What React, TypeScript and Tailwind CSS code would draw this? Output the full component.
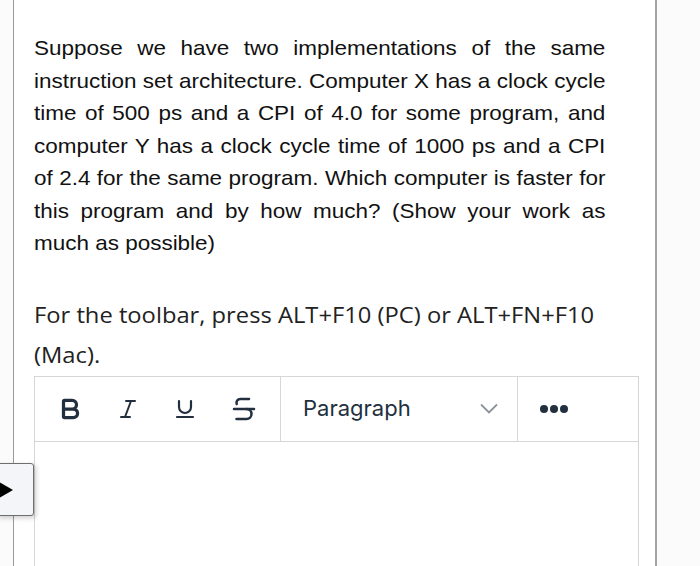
import React from 'react';
import { Bold, Italic, Underline, Strikethrough } from 'lucide-react';

export default function App() {
  return (
    <div className="relative h-[566px] w-[700px] overflow-hidden bg-[#fbfbfb]">
      {/* Question panel */}
      <div className="ml-[13px] h-full w-[644px] border-l border-r-2 border-l-[#9a9a9a] border-r-[#a3a3a3] bg-white pl-[20px] pr-[18px] pt-[32px]">
        {/* the source shot is stretched sideways, so the text is widened to match */}
        <p
          className="w-[534px] origin-left scale-x-[1.07] text-justify text-[21px] leading-[32.5px] text-[#111]"
          style={{ fontFamily: '"Liberation Sans", Arial, sans-serif' }}
        >
          Suppose we have two implementations of the same instruction set architecture. Computer X has a clock cycle
          time of 500 ps and a CPI of 4.0 for some program, and computer Y has a clock cycle time of 1000 ps and a CPI
          of 2.4 for the same program. Which computer is faster for this program and by how much? (Show your work as
          much as possible)
        </p>

        <p
          className="mt-[35px] w-[512px] origin-left scale-x-[1.13] text-[21px] leading-[40px] text-[#222]"
          style={{ fontFamily: '"Open Sans", "Noto Sans", sans-serif' }}
        >
          For the toolbar, press ALT+F10 (PC) or ALT+FN+F10 (Mac).
        </p>

        {/* Editor */}
        <div className="mt-px w-[605px] border border-[#d6d6d6]">
          <div className="flex h-[65px] items-center border-b border-[#d6d6d6] text-[#222f3e]">
            <div className="flex h-full w-[246px] items-center border-r border-[#d6d6d6] pl-[22px]">
              <Bold className="h-[26px] w-[26px]" strokeWidth={3} />
              <Italic className="ml-[33px] h-[24px] w-[24px]" strokeWidth={2} />
              <Underline className="ml-[33px] h-[24px] w-[24px]" strokeWidth={2.2} />
              <Strikethrough className="ml-[32px] h-[30px] w-[30px]" strokeWidth={2} />
            </div>
            <div className="flex h-full w-[237px] items-center justify-between border-r border-[#d6d6d6] pl-[22px] pr-[19px]">
              <span
                className="text-[22px] text-[#222f3e]"
                style={{ fontFamily: 'Inter, "Noto Sans", sans-serif' }}
              >
                Paragraph
              </span>
              <svg width="18" height="11" viewBox="0 0 18 11" fill="none">
                <polyline points="1,1.5 9,9.5 17,1.5" stroke="#8d939b" strokeWidth="1.8" />
              </svg>
            </div>
            <div className="flex h-full flex-1 items-center gap-[2px] pl-[22px]">
              <span className="h-[8px] w-[8px] rounded-full bg-[#222f3e]" />
              <span className="h-[8px] w-[8px] rounded-full bg-[#222f3e]" />
              <span className="h-[8px] w-[8px] rounded-full bg-[#222f3e]" />
            </div>
          </div>
          <div className="h-[200px]" />
        </div>
      </div>

      {/* Side toggle tab */}
      <div className="absolute left-[-4px] top-[463px] flex h-[53px] w-[38px] items-center rounded-[3px] border border-[#6e6e6e] bg-[#f4f5f9] shadow-[2px_2px_5px_rgba(0,0,0,0.2)]">
        <svg width="16" height="20" viewBox="0 0 16 20" className="ml-[2px]">
          <polygon points="0,2 14,10 0,18" fill="#000" />
        </svg>
      </div>
    </div>
  );
}
